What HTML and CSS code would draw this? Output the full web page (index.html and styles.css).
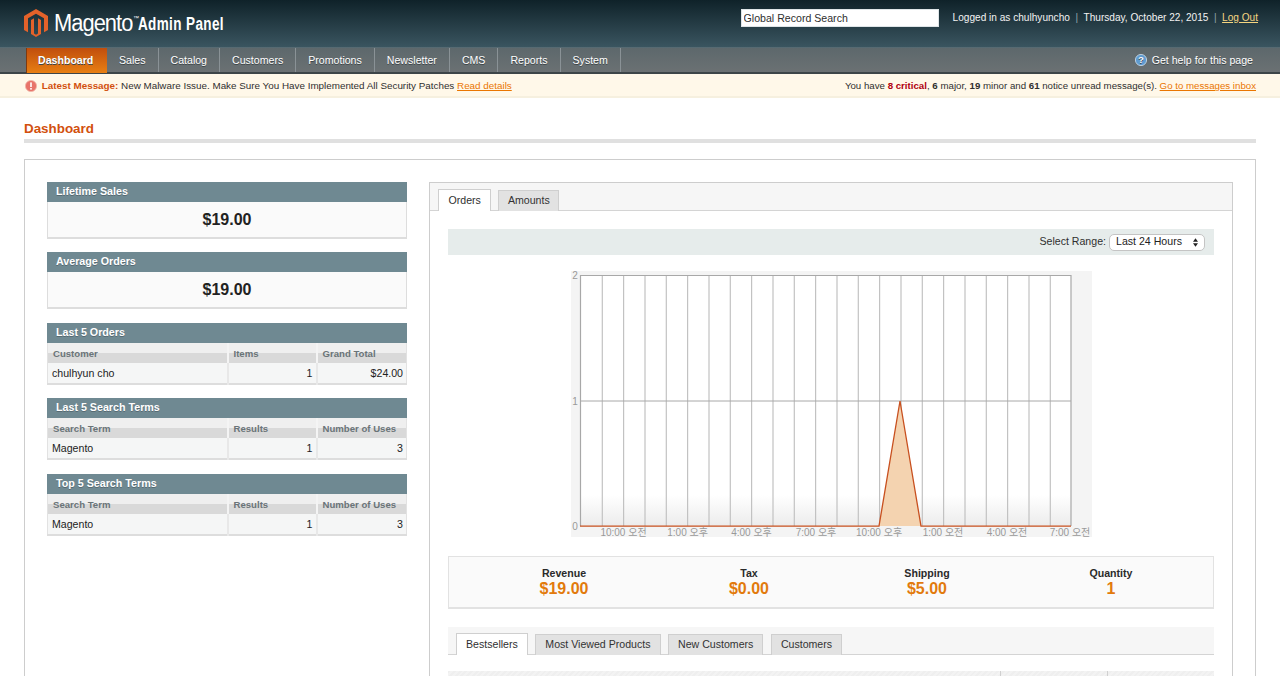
FILE: index.html
```html
<!DOCTYPE html>
<html lang="en">
<head>
<meta charset="utf-8">
<title>Magento Admin Panel</title>
<link rel="stylesheet" href="styles.css">
</head>
<body>
<header class="header">
  <div class="brand">
    <svg class="logo" viewBox="0 0 24 28" width="24" height="28"><path fill="#e4622a" d="M12 0 0 7v14l4 2.3V9.3l8-4.6 8 4.6v14l4-2.3V7z"/><path fill="#e4622a" d="M7 11l3-1.7v15.2l2 1.2 2-1.2V9.3l3 1.7v14l-5 3-5-3z"/></svg>
    <span class="brand-name">Magento</span><span class="brand-tm">™</span><span class="brand-sub">Admin Panel</span>
  </div>
  <div class="header-right">
    <input class="search" type="text" value="Global Record Search">
    <span class="session">Logged in as chulhyuncho<i class="pipe">|</i>Thursday, October 22, 2015<i class="pipe">|</i><a class="logout" href="#">Log Out</a></span>
  </div>
</header>
<nav class="nav">
  <ul class="menu">
    <li class="active">Dashboard</li><li>Sales</li><li>Catalog</li><li>Customers</li><li>Promotions</li><li>Newsletter</li><li>CMS</li><li>Reports</li><li>System</li>
  </ul>
  <div class="help">
    <svg viewBox="0 0 12 12" width="12" height="12"><circle cx="6" cy="6" r="5.6" fill="#5f9bd0" stroke="#cfe0ee" stroke-width=".8"/><text x="6" y="9" text-anchor="middle" class="help-q">?</text></svg>
    <span>Get help for this page</span>
  </div>
</nav>
<div class="notice">
  <div class="notice-left">
    <svg viewBox="0 0 12 12" width="12" height="12"><circle cx="6" cy="6" r="5.6" fill="#e8746a" stroke="#f0b5a8" stroke-width=".8"/><rect x="5.2" y="2.4" width="1.6" height="4.6" fill="#fff"/><rect x="5.2" y="8" width="1.6" height="1.6" fill="#fff"/></svg>
    <b class="latest">Latest Message:</b> New Malware Issue. Make Sure You Have Implemented All Security Patches <a href="#">Read details</a>
  </div>
  <div class="notice-right">You have <b class="crit">8 critical</b>, <b>6</b> major, <b>19</b> minor and <b>61</b> notice unread message(s). <a href="#">Go to messages inbox</a></div>
</div>
<main class="content">
  <h1 class="title">Dashboard</h1>
  <div class="outer">
    <aside class="side">
      <section class="box"><h2>Lifetime Sales</h2><div class="amount">$19.00</div></section>
      <section class="box"><h2>Average Orders</h2><div class="amount">$19.00</div></section>
      <section class="box"><h2>Last 5 Orders</h2>
        <table class="grid"><tr><th>Customer</th><th>Items</th><th>Grand Total</th></tr><tr><td>chulhyun cho</td><td class="num">1</td><td class="num">$24.00</td></tr></table></section>
      <section class="box"><h2>Last 5 Search Terms</h2>
        <table class="grid"><tr><th>Search Term</th><th>Results</th><th>Number of Uses</th></tr><tr><td>Magento</td><td class="num">1</td><td class="num">3</td></tr></table></section>
      <section class="box"><h2>Top 5 Search Terms</h2>
        <table class="grid"><tr><th>Search Term</th><th>Results</th><th>Number of Uses</th></tr><tr><td>Magento</td><td class="num">1</td><td class="num">3</td></tr></table></section>
    </aside>
    <section class="panel">
      <div class="tabs tabs-top"><span class="tab on">Orders</span><span class="tab">Amounts</span></div>
      <div class="panel-body">
        <div class="range">
          <label>Select Range:</label>
          <span class="select-wrap"><select class="select"><option>Last 24 Hours</option></select>
            <svg class="select-arrows" viewBox="0 0 6 10" width="5" height="9"><path fill="#222" d="M3 0l3 4H0zM3 10 0 6h6z"/></svg></span>
        </div>
        <svg class="chart" viewBox="571 271 521 266" width="521" height="266">
          <defs><linearGradient id="fade" x1="0" y1="0" x2="0" y2="1"><stop offset="0" stop-color="#fff"/><stop offset="1" stop-color="#ececec"/></linearGradient></defs>
          <rect x="571" y="271" width="521" height="266" fill="#f4f4f4"/>
          <rect x="581" y="275.5" width="490" height="250.5" fill="#fff"/>
          <rect x="581" y="495" width="490" height="31" fill="url(#fade)"/>
          <g class="vlines">
            <path d="M602.3 275V526M623.6 275V526M645 275V526M666.3 275V526M687.6 275V526M709 275V526M730.3 275V526M751.6 275V526M773 275V526M794.3 275V526M815.6 275V526M837 275V526M858.3 275V526M879.6 275V526M901 275V526M922.3 275V526M943.6 275V526M965 275V526M986.3 275V526M1007.6 275V526M1029 275V526M1050.3 275V526"/>
          </g>
          <path class="frame" d="M580.5 526V275.5H1071V526"/>
          <path class="mid" d="M580 401H1071"/>
          <path d="M879 526 900 401 921 526z" fill="#f4d3b0"/>
          <path class="series" d="M580 526.2H879L900 401 921 526.2H1071"/>
          <g class="ylab"><text x="575" y="279">2</text><text x="575" y="405">1</text><text x="575" y="530">0</text></g>
          <g class="xlab">
            <text x="623.5" y="536">10:00 오전</text><text x="687.6" y="536">1:00 오후</text><text x="751.5" y="536">4:00 오후</text><text x="816" y="536">7:00 오후</text><text x="879" y="536">10:00 오후</text><text x="943" y="536">1:00 오전</text><text x="1007" y="536">4:00 오전</text><text x="1070" y="536">7:00 오전</text>
          </g>
        </svg>
        <div class="summary">
          <div><span>Revenue</span><b>$19.00</b></div>
          <div><span>Tax</span><b>$0.00</b></div>
          <div><span>Shipping</span><b>$5.00</b></div>
          <div><span>Quantity</span><b>1</b></div>
        </div>
        <div class="tabs tabs-low"><span class="tab on">Bestsellers</span><span class="tab">Most Viewed Products</span><span class="tab">New Customers</span><span class="tab">Customers</span></div>
        <div class="low-head"><span></span><span></span><span></span></div>
      </div>
    </section>
  </div>
</main>
</body>
</html>
```

FILE: styles.css
```css
* { box-sizing: border-box; }
html, body { margin: 0; height: 676px; overflow: hidden; background: #fff; }
body { font: 10.6px/14px "Liberation Sans", Arial, sans-serif; color: #2f2f2f; }
a { color: #ea7601; text-decoration: underline; }
h1, h2 { margin: 0; }

.header { height: 48px; display: flex; justify-content: space-between; background: linear-gradient(#0f2229, #3a5560); border-bottom: 1px solid #566a72; padding: 9px 22px 0 24px; }
.brand { display: flex; align-items: flex-start; color: #fff; }
.logo { display: block; flex: none; }
.brand-name { font-size: 23px; line-height: 29px; margin-left: 6px; letter-spacing: -1px; transform: scaleX(.95); transform-origin: 0 50%; width: 79px; }
.brand-tm { font-size: 6px; line-height: 18px; width: 5px; }
.brand-sub { font-size: 18px; line-height: 31px; font-weight: bold; letter-spacing: .5px; transform: scaleX(.75); transform-origin: 0 50%; white-space: nowrap; width: 86px; }
.header-right { display: flex; align-items: flex-start; color: #f2f2f2; }
.search { width: 198px; height: 18px; border: 1px solid #dfe5e8; background: #fff; padding: 0 2px 1px; font: 10.6px "Liberation Sans", Arial, sans-serif; color: #2f2f2f; margin-right: 14px; outline: 0; }
.session { font-size: 10.1px; line-height: 17px; white-space: nowrap; }
.pipe { font-style: normal; color: #8fa3ab; margin: 0 5.5px; }
.logout { color: #f5d580; }

.nav { height: 26px; display: flex; justify-content: space-between; background: linear-gradient(#5d686c, #6b7173); border-bottom: 2px solid #3d4548; padding-left: 26px; color: #fff; }
.menu { display: flex; list-style: none; margin: 0; padding: 0; }
.menu li { padding: 0 12px; line-height: 24px; border-right: 1px solid #8a9296; text-shadow: 0 1px 0 #3d4548; height: 24px; }
.menu .active { background: linear-gradient(#c04e0e, #e87f12); font-weight: bold; border-right: 0; border-left: 1px solid #7e3a10; height: 25px; width: 81px; padding: 0 0 0 11px; }
.help { display: flex; align-items: center; gap: 5px; height: 24px; padding-right: 27px; text-shadow: 0 1px 0 #3d4548; }
.help-q { font-size: 9px; font-weight: bold; fill: #fff; }

.notice { height: 24px; display: flex; justify-content: space-between; align-items: center; background: #fff8e9; border-bottom: 2px solid #f6f0df; padding: 2px 24px 0 25px; font-size: 9.85px; color: #2f2f2f; }
.notice-left svg { vertical-align: -3px; margin-right: 2px; }
.notice-right { font-size: 9.7px; }
.latest { color: #d2500e; }
.crit { color: #b00010; }

.content { padding: 23px 24px 0; }
.title { font-size: 13.4px; line-height: 16px; font-weight: bold; color: #d2500e; padding-bottom: 2px; border-bottom: 4px solid #e0e0e0; }
.outer { margin-top: 16px; border: 1px solid #cdcdcd; border-bottom: 0; height: 520px; padding: 22px 22px 0; display: flex; gap: 22px; align-items: flex-start; }

.side { width: 360px; flex: none; }
.box { margin-bottom: 13.5px; }
.box:first-child { margin-bottom: 13px; }
.box h2 { height: 20px; background: #6f8992; color: #fff; font-size: 10.7px; line-height: 19px; padding-left: 9px; text-shadow: 0 1px 0 #566a72; }
.amount { height: 37px; background: #fafafa; border: 1px solid #ddd; border-top: 0; border-bottom-width: 2px; font-size: 16px; line-height: 35px; font-weight: bold; color: #222; text-align: center; }
.grid { width: 100%; table-layout: fixed; border-collapse: collapse; border-bottom: 2px solid #ddd; border-left: 1px solid #e2e2e2; border-right: 1px solid #e2e2e2; }
.grid th { height: 20px; padding: 2px 0 0 5px; text-align: left; font-size: 9.6px; font-weight: bold; color: #6a7478; background: #d9d9d9 linear-gradient(#efefef, #efefef) no-repeat top / 100% 50%; border-left: 2px solid #f4f4f4; }
.grid th:first-child { width: 180px; border-left: 0; }
.grid th:nth-child(2) { width: 89px; }
.grid td { height: 21px; padding: 0 3px 0 4px; background: #f5f6f6; border-left: 2px solid #e8e8e8; color: #222; }
.grid td:first-child { border-left: 0; }
.grid .num { text-align: right; }

.panel { width: 804px; flex: none; border: 1px solid #cdcdcd; border-bottom: 0; height: 498px; }
.tabs { display: flex; align-items: flex-end; background: #f6f6f6; border-bottom: 1px solid #d4d4d4; }
.tabs-top { height: 28px; padding-left: 8px; gap: 7px; }
.tabs-low { height: 28px; padding-left: 8px; gap: 7.5px; margin-top: 18px; }
.tab { height: 21px; line-height: 19px; padding: 0 8.5px; background: #e2e2e2; border: 1px solid #cfcfcf; border-bottom: 0; color: #333; margin-bottom: -1px; }
.tab.on { background: #fff; padding: 0 9.5px; height: 22px; color: #2f2f2f; line-height: 20px; }
.tabs-low .tab { padding: 0 9px; }
.panel-body { padding: 18px 18px 0; }
.range { height: 26px; background: #e6eceb; display: flex; justify-content: flex-end; align-items: center; gap: 3px; padding-right: 9px; }
.range label { margin-top: -2px; }
.select-wrap { position: relative; display: block; height: 17px; }
.select { display: block; appearance: none; -webkit-appearance: none; width: 96px; height: 17px; border: 1px solid #c4c4c4; border-radius: 5px; background: #fff; padding: 0 0 2px 6px; font: 10.6px "Liberation Sans", Arial, sans-serif; color: #222; outline: 0; }
.select-arrows { position: absolute; right: 7px; top: 4px; }
.chart { display: block; margin: 16px 0 0 123px; }
.vlines path { stroke: #c2c2c2; stroke-width: 1.2; fill: none; }
.frame { stroke: #a8a8a8; stroke-width: 1.2; fill: none; }
.mid { stroke: #a8a8a8; stroke-width: 1; fill: none; }
.series { stroke: #c8501f; stroke-width: 1.3; fill: none; }
.ylab text { font: 10px "Liberation Sans", Arial, sans-serif; fill: #999; text-anchor: middle; }
.xlab text { font: 10px "Liberation Sans", "Noto Sans CJK KR", sans-serif; fill: #999; text-anchor: middle; }

.summary { margin-top: 19px; height: 53px; background: #fafafa; border: 1px solid #e2e2e2; border-bottom-width: 2px; display: grid; grid-template-columns: 230px 140px 216px 152px; padding-top: 9px; text-align: center; }
.summary span { display: block; font-weight: bold; color: #2a2a2a; line-height: 14px; }
.summary b { display: block; font-size: 16px; line-height: 17px; color: #e27a0c; }
.low-head { margin-top: 16px; height: 20px; display: grid; grid-template-columns: 552px 107px 107px; background: repeating-linear-gradient(135deg, #efefef 0 2px, #f3f3f3 2px 4px); }
.low-head span + span { border-left: 1px solid #d0d0d0; }
```
